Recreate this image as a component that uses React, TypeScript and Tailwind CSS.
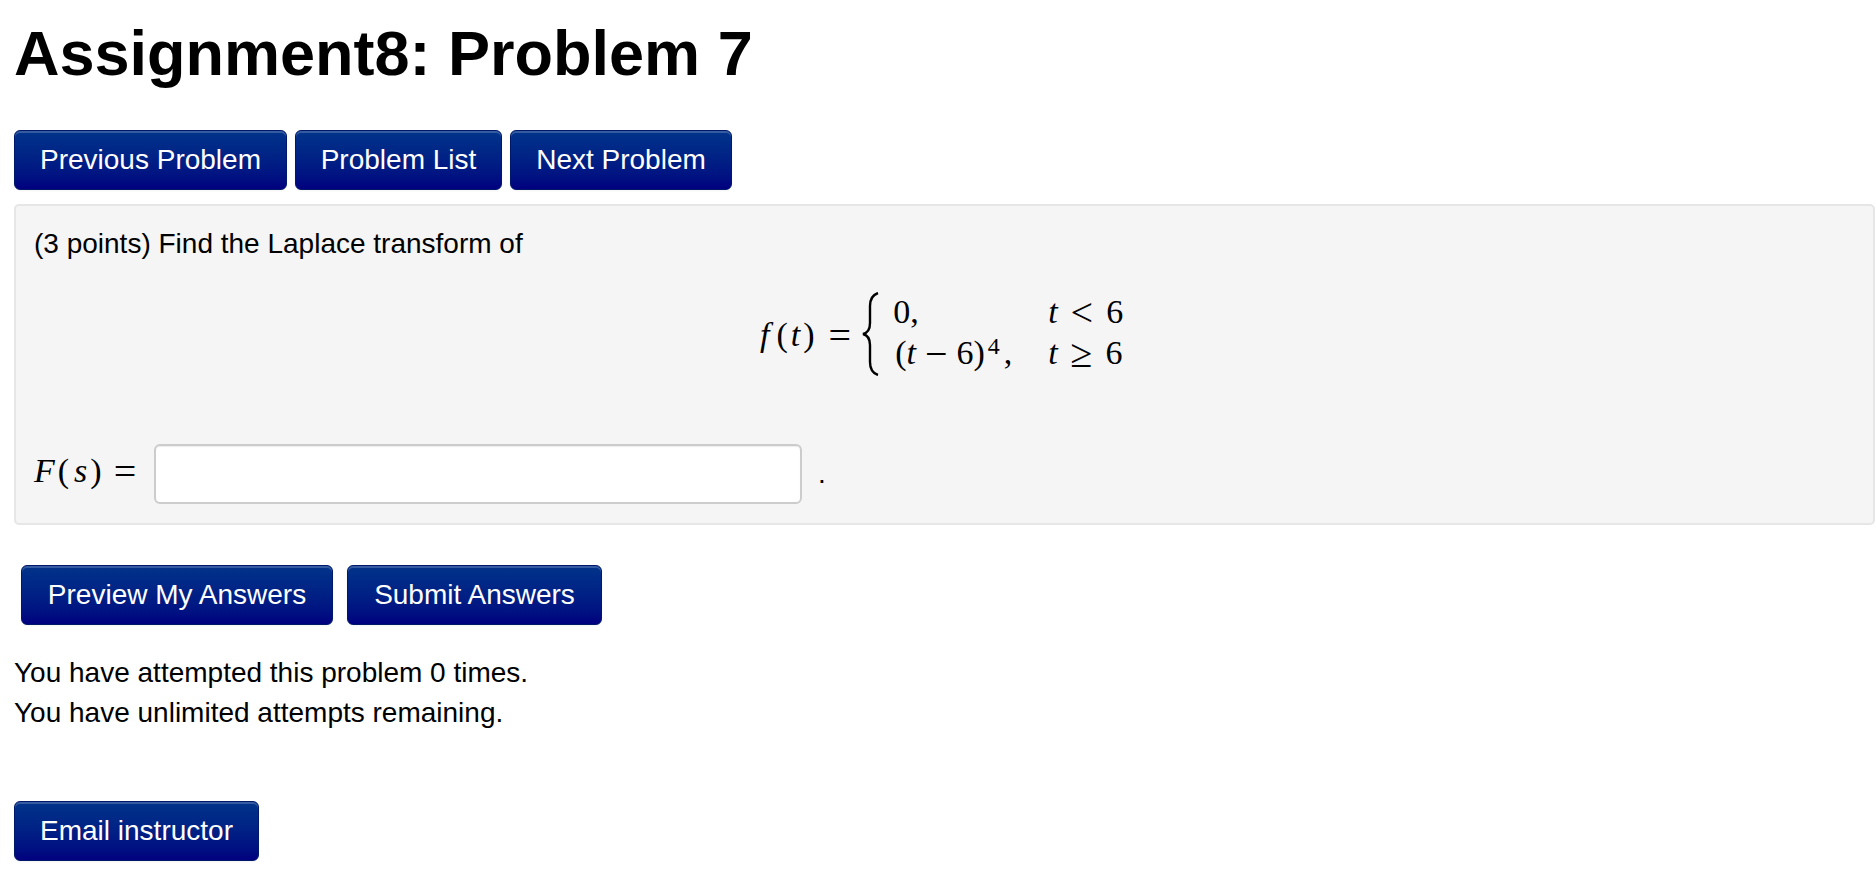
function NavButton({ label, className = "" }: { label: string; className?: string }) {
  return (
    <button
      className={
        "h-[60px] rounded-[6px] border border-[#00186a] bg-gradient-to-b from-[#03338a] to-[#00007f] text-center text-[28px] leading-[34px] text-white shadow-[inset_0_2px_0_rgba(255,255,255,0.2),0_1px_2px_rgba(0,0,0,0.05)] " +
        className
      }
    >
      {label}
    </button>
  );
}

function Brace() {
  return (
    <svg width="17" height="84" viewBox="0 0 17 84" className="ml-[11px] mr-[14px] shrink-0">
      <path
        d="M16 1 C10 3 8 7 8 14 L8 31 C8 37 5 41 1 42 C5 43 8 47 8 53 L8 70 C8 77 10 81 16 83"
        fill="none"
        stroke="#000"
        strokeWidth="2.4"
      />
    </svg>
  );
}

// operators are set bigger, the serif's are narrower than the math font's
function Op({ children, className = "" }: { children: string; className?: string }) {
  return <span className={"translate-y-[3px] text-[40px] leading-[30px] " + className}>{children}</span>;
}

export default function App() {
  return (
    <div className="min-h-screen bg-white pl-[14px] pr-[1px] font-['Liberation_Sans',Arial,sans-serif] text-black">
      <h1 className="pt-[17px] text-[63px] font-bold leading-[72px]">Assignment8: Problem 7</h1>

      <div className="mt-[41px] flex gap-[8px]">
        <NavButton label="Previous Problem" className="w-[273px]" />
        <NavButton label="Problem List" className="w-[207px]" />
        <NavButton label="Next Problem" className="w-[222px]" />
      </div>

      <div className="mt-[14px] h-[321px] rounded-[5px] border-2 border-[#e6e6e6] bg-[#f5f5f5] pl-[18px] pt-[18px]">
        <p className="text-[28px] leading-[40px]">(3 points) Find the Laplace transform of</p>

        <div className="mt-[28px] flex h-[84px] items-center pl-[726px] font-['Liberation_Serif',serif] text-[34px] leading-[41px]">
          <span className="flex items-baseline">
            <span className="tracking-[3px]">
              <i className="pr-[4px]">f</i>(<i>t</i>)
            </span>
            <Op className="ml-[11px]">=</Op>
          </span>
          <Brace />
          <div className="mb-[5px] grid grid-cols-[155px_auto] grid-rows-[41px_41px]">
            <span>0,</span>
            <span className="flex items-baseline">
              <i>t</i>
              <Op className="ml-[13px]">&lt;</Op>
              <span className="ml-[13px]">6</span>
            </span>
            <span className="flex items-baseline pl-[2px]">
              (<i>t</i>
              <Op className="mx-[9px]">−</Op>
              <span>6)</span>
              <sup className="top-[-10px] ml-[3px] text-[24px] leading-none">4</sup>
              <span className="ml-[4px]">,</span>
            </span>
            <span className="flex items-baseline">
              <i>t</i>
              <Op className="ml-[13px]">≥</Op>
              <span className="ml-[13px]">6</span>
            </span>
          </div>
        </div>

        <div className="mt-[68px] flex items-center">
          <span className="mb-[8px] flex w-[120px] items-baseline font-['Liberation_Serif',serif] text-[34px] tracking-[3px]">
            <i>F</i>(<i className="pl-[2px]">s</i>)
            <Op className="ml-[9px]">=</Op>
          </span>
          <input
            type="text"
            className="h-[60px] w-[648px] rounded-[6px] border-2 border-[#cccccc] bg-white shadow-[inset_0_1px_1px_rgba(0,0,0,0.075)]"
          />
          <span className="ml-[16px] text-[28px] leading-[40px]">.</span>
        </div>
      </div>

      <div className="mt-[40px] flex gap-[14px] pl-[7px]">
        <NavButton label="Preview My Answers" className="w-[312px]" />
        <NavButton label="Submit Answers" className="w-[255px]" />
      </div>

      <div className="mt-[28px] text-[28px] leading-[40px]">
        <p>You have attempted this problem 0 times.</p>
        <p>You have unlimited attempts remaining.</p>
      </div>

      <div className="mt-[68px]">
        <NavButton label="Email instructor" className="w-[245px]" />
      </div>
    </div>
  );
}
